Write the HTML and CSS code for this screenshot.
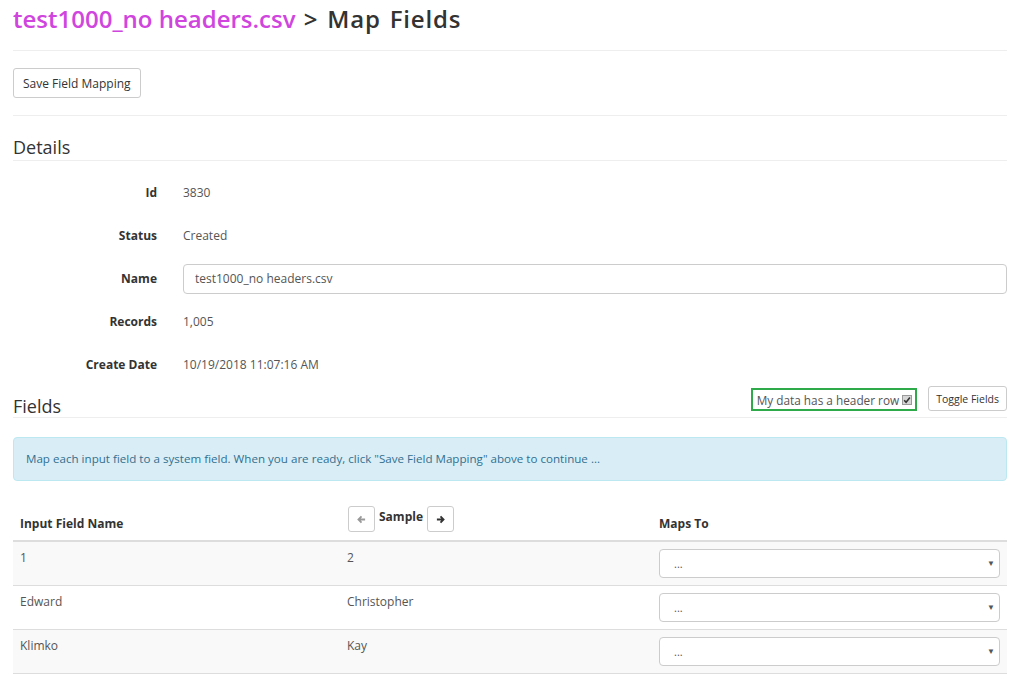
FILE: index.html
```html
<!DOCTYPE html>
<html lang="en">
<head>
    <meta charset="UTF-8">
    <meta name="viewport" content="width=device-width, initial-scale=1.0">
    <title>Map Fields</title>
    <link rel="stylesheet" href="styles.css">
</head>
<body>
    <div class="page">
        <h1 class="page-title"><span class="file-name">test1000_no headers.csv</span> <span class="crumb">&gt; Map Fields</span></h1>
        <hr>
        <button type="button" class="btn">Save Field Mapping</button>
        <hr>

        <h3 class="section-title">Details</h3>
        <div class="details">
            <div class="detail-row">
                <span class="detail-label">Id</span>
                <span class="detail-value">3830</span>
            </div>
            <div class="detail-row">
                <span class="detail-label">Status</span>
                <span class="detail-value">Created</span>
            </div>
            <div class="detail-row">
                <label class="detail-label" for="name">Name</label>
                <input type="text" id="name" class="text-input" value="test1000_no headers.csv">
            </div>
            <div class="detail-row">
                <span class="detail-label">Records</span>
                <span class="detail-value">1,005</span>
            </div>
            <div class="detail-row">
                <span class="detail-label">Create Date</span>
                <span class="detail-value">10/19/2018 11:07:16 AM</span>
            </div>
        </div>

        <div class="fields-head">
            <h3 class="section-title plain">Fields</h3>
            <div class="fields-tools">
                <label class="header-toggle">
                    My data has a header row
                    <span class="fake-check">
                        <svg width="10" height="10" viewBox="0 0 10 10">
                            <rect x="0.5" y="0.5" width="9" height="9" fill="#d6d6d6" stroke="#9a9a9a"/>
                            <path d="M2.2 5.2 L4.1 7.2 L7.9 2.6" fill="none" stroke="#333" stroke-width="1.6"/>
                        </svg>
                    </span>
                </label>
                <button type="button" class="btn btn-sm">Toggle Fields</button>
            </div>
        </div>

        <div class="alert-info">
            Map each input field to a system field. When you are ready, click "Save Field Mapping" above to continue ...
        </div>

        <table class="map-table">
            <thead>
                <tr>
                    <th class="col-input">Input Field Name</th>
                    <th class="col-sample">
                        <div class="sample-head">
                            <button type="button" class="arrow-btn">
                                <svg width="9" height="9" viewBox="0 0 10 10">
                                    <path d="M9 5 H2 M5 1.6 L1.6 5 L5 8.4" fill="none" stroke="#999" stroke-width="2"/>
                                </svg>
                            </button>
                            <span>Sample</span>
                            <button type="button" class="arrow-btn">
                                <svg width="9" height="9" viewBox="0 0 10 10">
                                    <path d="M1 5 H8 M5 1.6 L8.4 5 L5 8.4" fill="none" stroke="#333" stroke-width="2"/>
                                </svg>
                            </button>
                        </div>
                    </th>
                    <th class="col-maps">Maps To</th>
                </tr>
            </thead>
            <tbody>
                <tr>
                    <td>1</td>
                    <td>2</td>
                    <td><div class="select-wrap"><select class="map-select"><option>...</option></select></div></td>
                </tr>
                <tr>
                    <td>Edward</td>
                    <td>Christopher</td>
                    <td><div class="select-wrap"><select class="map-select"><option>...</option></select></div></td>
                </tr>
                <tr>
                    <td>Klimko</td>
                    <td>Kay</td>
                    <td><div class="select-wrap"><select class="map-select"><option>...</option></select></div></td>
                </tr>
            </tbody>
        </table>
    </div>
</body>
</html>
```

FILE: styles.css
```css
* {
    box-sizing: border-box;
    margin: 0;
    padding: 0;
}

body {
    font-family: "Open Sans", "Noto Sans", sans-serif;
    font-size: 12px;
    color: #555;
    background-color: #fff;
}

.page {
    padding: 0 17px 0 13px;
}

hr {
    border: none;
    border-top: 1px solid #eee;
}

.page-title {
    font-size: 24px;
    font-weight: 600;
    line-height: 38px;
    color: #333;
    margin-bottom: 12px;
    word-spacing: 2px;
}

.file-name {
    color: #cf45de;
    word-spacing: 0;
}

.crumb {
    letter-spacing: 0.8px;
}

.btn {
    font-family: inherit;
    font-size: 12px;
    color: #333;
    background-color: #fff;
    border: 1px solid #ccc;
    border-radius: 3px;
    height: 30px;
    padding: 0 9px;
    margin: 17px 0;
    cursor: pointer;
}

.btn-sm {
    font-size: 10.5px;
    height: 25px;
    padding: 0 7px;
    margin: 0;
}

.section-title {
    font-size: 18px;
    font-weight: 400;
    line-height: 22px;
    color: #333;
    margin-top: 20px;
    padding-bottom: 2px;
    border-bottom: 1px solid #eee;
}

.section-title.plain {
    margin: 0;
    border: none;
    padding: 0;
}

.details {
    margin-top: 10px;
}

.detail-row {
    display: grid;
    grid-template-columns: 144px 1fr;
    column-gap: 26px;
    align-items: center;
    height: 43px;
}

.detail-label {
    text-align: right;
    font-weight: bold;
    color: #333;
}

.detail-value {
    color: #555;
}

.text-input {
    font-family: inherit;
    font-size: 12px;
    color: #555;
    height: 30px;
    padding: 0 11px;
    border: 1px solid #ccc;
    border-radius: 4px;
    width: 100%;
}

.fields-head {
    display: flex;
    justify-content: space-between;
    align-items: flex-end;
    border-bottom: 1px solid #eee;
}

.fields-tools {
    display: flex;
    align-items: flex-end;
    gap: 11px;
    margin-bottom: 6px;
}

.header-toggle {
    display: flex;
    align-items: center;
    gap: 3px;
    height: 23px;
    padding: 0 3px 0 4px;
    border: 2px solid #2eaa4a;
    color: #555;
    font-size: 11.8px;
}

.fake-check {
    display: flex;
}

.alert-info {
    margin: 19px 0 18px;
    padding: 14px 12px;
    font-size: 11.6px;
    line-height: 14px;
    color: #31708f;
    background-color: #d9edf7;
    border: 1px solid #bce8f1;
    border-radius: 4px;
}

.map-table {
    width: 100%;
    border-collapse: collapse;
    table-layout: fixed;
}

.map-table th,
.map-table td {
    padding: 7px;
    text-align: left;
    line-height: 17px;
}

.map-table th {
    vertical-align: bottom;
    color: #333;
    font-weight: bold;
    padding-bottom: 8px;
    border-bottom: 2px solid #ddd;
}

.map-table td {
    vertical-align: top;
    border-bottom: 1px solid #ddd;
}

.map-table tbody tr:nth-child(odd) {
    background-color: #f9f9f9;
}

.col-input {
    width: 327px;
}

.col-sample {
    width: 312px;
}

.sample-head {
    display: flex;
    align-items: center;
    gap: 4px;
    margin-left: 1px;
}

.sample-head span {
    margin-top: -5px;
}

.arrow-btn {
    width: 27px;
    height: 26px;
    display: flex;
    align-items: center;
    justify-content: center;
    background-color: #fff;
    border: 1px solid #ccc;
    border-radius: 3px;
}

.select-wrap {
    position: relative;
}

.select-wrap::after {
    content: "\25BC";
    position: absolute;
    right: 5px;
    top: 5px;
    font-size: 8px;
    color: #555;
    pointer-events: none;
}

.map-select {
    appearance: none;
    -webkit-appearance: none;
    font-family: inherit;
    font-size: 11px;
    color: #555;
    width: 100%;
    height: 29px;
    padding: 0 14px;
    background-color: #fff;
    border: 1px solid #ccc;
    border-radius: 4px;
}
```
